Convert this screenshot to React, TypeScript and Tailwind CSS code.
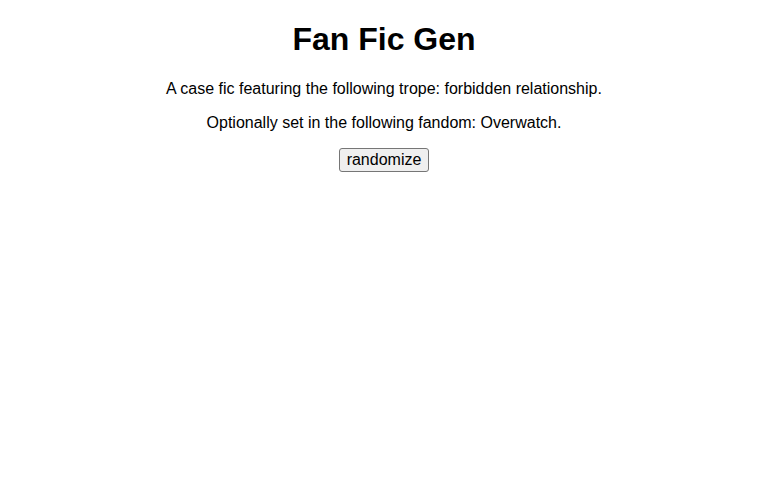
export default function App() {
  return (
    <div className="min-h-screen bg-white text-center text-black font-['Liberation_Sans',Arial,sans-serif]">
      <h1 className="pt-[21px] text-[32px] leading-[37px] font-bold">Fan Fic Gen</h1>
      <p className="mt-[22px] text-base leading-[18px]">
        A case fic featuring the following trope: forbidden relationship.
      </p>
      <p className="mt-4 text-base leading-[18px]">Optionally set in the following fandom: Overwatch.</p>
      <div className="mt-4">
        <button
          type="button"
          className="h-6 rounded-[3px] border border-[#767676] bg-[#efefef] px-[7px] text-base leading-[18px] text-black"
        >
          randomize
        </button>
      </div>
    </div>
  );
}
